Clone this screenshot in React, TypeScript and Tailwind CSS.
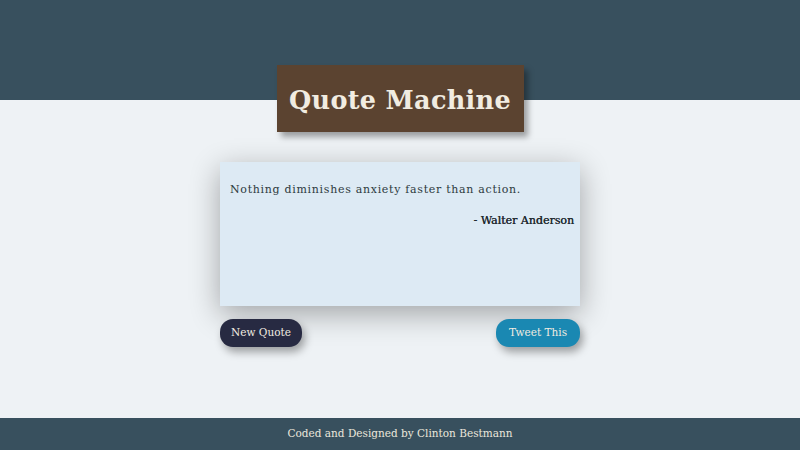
const slab = { fontFamily: '"DejaVu Serif", "Liberation Serif", serif' };

function Header() {
  return (
    <header className="flex h-[100px] justify-center bg-[#38505e] pt-[65px]">
      <div className="flex h-[67px] w-[247px] shrink-0 items-center justify-center bg-[#5b4330] pt-[4px] shadow-[4px_5px_6px_rgba(0,0,0,0.35)]">
        <h1 className="text-[25.5px] font-bold tracking-[0.3px] text-[#f1ece1]">
          Quote Machine
        </h1>
      </div>
    </header>
  );
}

function QuoteCard() {
  return (
    <div className="h-[144px] w-[360px] bg-[#ddeaf4] pl-[10px] pr-[6px] pt-[20px] shadow-[0_8px_28px_rgba(0,0,0,0.32)]">
      <p className="text-[11px] leading-[16px] tracking-[0.7px] text-[#2d3a40]">
        Nothing diminishes anxiety faster than action.
      </p>
      <p className="mt-[15px] text-right text-[11px] leading-[16px] text-[#1f2a30] [text-shadow:0.3px_0_0_#1f2a30]">
        - Walter Anderson
      </p>
    </div>
  );
}

export default function App() {
  return (
    <div style={slab} className="flex min-h-[450px] flex-col bg-[#eef2f5]">
      <Header />
      <main className="flex flex-1 flex-col items-center pt-[62px]">
        <QuoteCard />
        <div className="mt-[13px] flex w-[360px] justify-between">
          <button className="h-[28px] w-[82px] rounded-[13px] bg-[#272a42] text-[10.5px] text-[#f1ece1] shadow-[3px_5px_8px_rgba(0,0,0,0.35)]">
            New Quote
          </button>
          <button className="h-[28px] w-[84px] rounded-[13px] bg-[#1a88b2] text-[10.5px] text-[#f1ece1] shadow-[3px_5px_8px_rgba(0,0,0,0.35)]">
            Tweet This
          </button>
        </div>
      </main>
      <footer className="flex h-[32px] items-center justify-center bg-[#38505e] text-[10.5px] text-[#ebe7dc]">
        Coded and Designed by Clinton Bestmann
      </footer>
    </div>
  );
}
